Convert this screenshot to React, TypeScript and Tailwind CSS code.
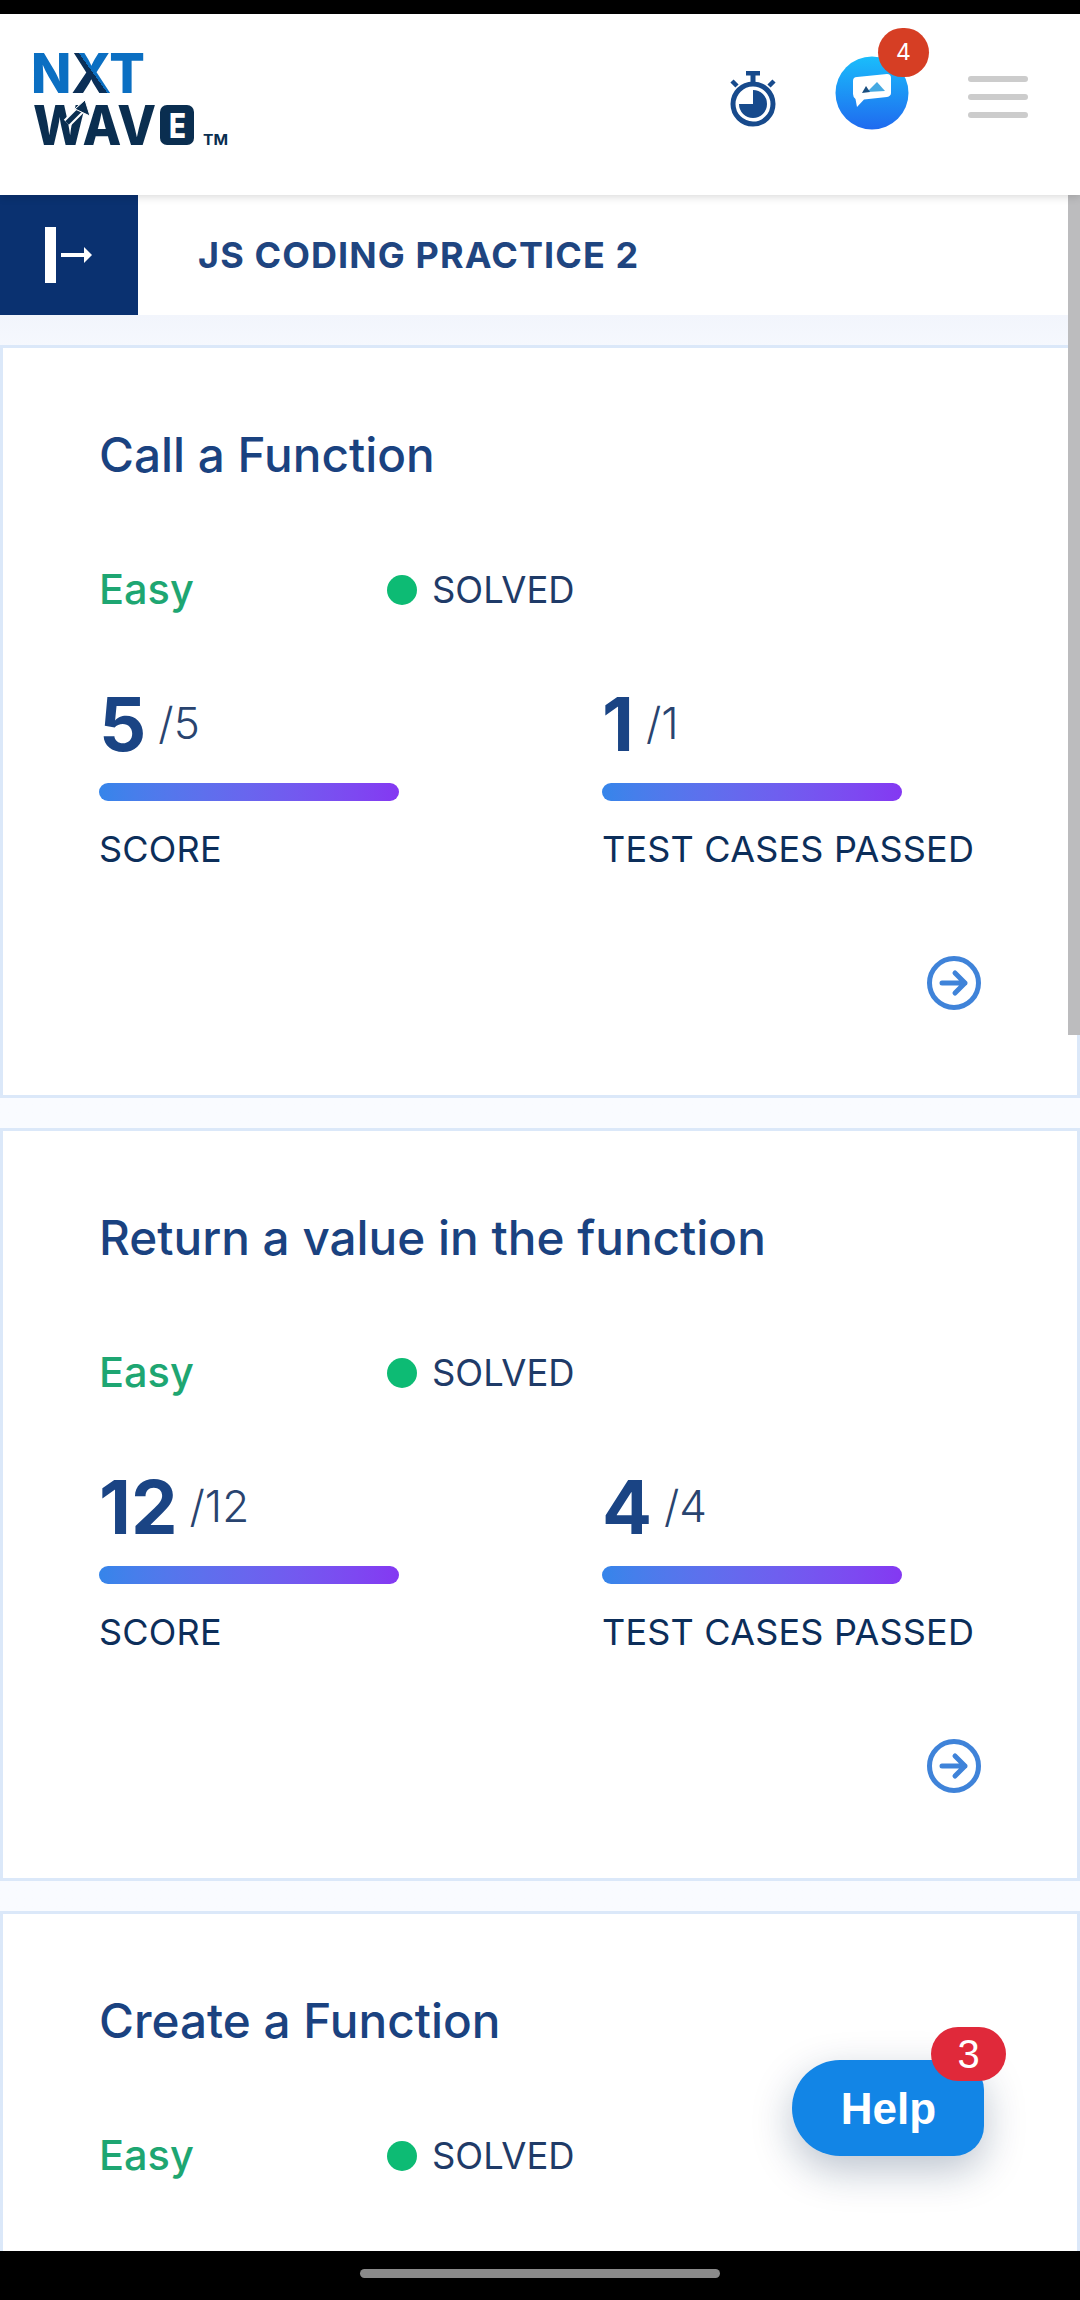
import React from "react";

function Logo() {
  return (
    <svg width="210" height="110" viewBox="0 0 210 110" className="block overflow-visible" aria-label="NXT WAVE">
      <defs>
        <linearGradient id="xg" gradientUnits="userSpaceOnUse" x1="34" y1="40" x2="76" y2="10">
          <stop offset="0" stopColor="#0b2f57" />
          <stop offset="0.62" stopColor="#0b2f57" />
          <stop offset="0.62" stopColor="#0b6fc2" />
          <stop offset="1" stopColor="#0b6fc2" />
        </linearGradient>
      </defs>
      <text x="-3" y="40" fontFamily="Inter" fontWeight="800" fontSize="55" textLength="114" lengthAdjust="spacingAndGlyphs">
        <tspan fill="#0b6fc2">N</tspan>
        <tspan fill="url(#xg)">X</tspan>
        <tspan fill="#0b6fc2">T</tspan>
      </text>
      <text x="-1" y="92" fontFamily="Inter" fontWeight="800" fontSize="55" fill="#0a2e50" textLength="123" lengthAdjust="spacingAndGlyphs">WAV</text>
      <path d="M33 70 L48 55" fill="none" stroke="#fff" strokeWidth="9" />
      <path d="M33 70 L48 55" fill="none" stroke="#0a2e50" strokeWidth="5" />
      <path d="M41 56 L51 47 L56 63 Z" fill="#0a2e50" stroke="#fff" strokeWidth="1" />
      <rect x="126" y="52" width="34" height="40" rx="7" fill="#0a2e50" />
      <text x="135" y="85" fontFamily="Inter" fontWeight="800" fontSize="34" fill="#fff" textLength="17" lengthAdjust="spacingAndGlyphs">E</text>
      <text x="169" y="92" fontFamily="Inter" fontWeight="700" fontSize="15" fill="#0a2e50" textLength="25" lengthAdjust="spacingAndGlyphs">TM</text>
    </svg>
  );
}

function Stopwatch() {
  return (
    <svg width="50" height="56" viewBox="0 0 50 56" className="block">
      <rect x="18" y="0" width="14" height="4.5" fill="#174a8c" />
      <rect x="22.5" y="3" width="5" height="8" fill="#174a8c" />
      <path d="M4 10 L9 15 M46 10 L41 15" stroke="#174a8c" strokeWidth="4.5" />
      <circle cx="25" cy="33" r="20" fill="none" stroke="#174a8c" strokeWidth="5" />
      <path d="M25 19 A14 14 0 1 1 11 33 H25 Z" fill="#174a8c" />
    </svg>
  );
}

function ChatIcon() {
  return (
    <svg width="74" height="74" viewBox="0 0 74 74" className="block">
      <defs>
        <linearGradient id="chat" x1="0" y1="0" x2="0" y2="1">
          <stop offset="0" stopColor="#1abdfb" />
          <stop offset="1" stopColor="#1f6aef" />
        </linearGradient>
      </defs>
      <circle cx="37" cy="37" r="36.5" fill="url(#chat)" />
      <path d="M22 21 L52 18 Q56 18 56 22 L56 37 Q56 40 52 41 L29 43.5 L22 51 L20.5 43 Q18 41 18 38 L18 25 Q18 21 22 21 Z" fill="#fff" />
      <path d="M32 36 L42 26 L50 35 Z" fill="#45a9e2" />
      <path d="M27 37 L31 30 L35 36 Z" fill="#1b4f80" />
    </svg>
  );
}

function ArrowCircle() {
  return (
    <svg width="56" height="56" viewBox="0 0 56 56" className="block">
      <circle cx="28" cy="28" r="24.5" fill="none" stroke="#3f83d9" strokeWidth="5" />
      <path d="M16 28 H39 M29 18 L39 28 L29 38" fill="none" stroke="#3f83d9" strokeWidth="5" strokeLinecap="round" strokeLinejoin="round" />
    </svg>
  );
}

function Stat({ value, total, label }: { value: string; total: string; label: string }) {
  return (
    <div>
      <div className="flex items-center h-[76px] leading-[76px]">
        <span className="text-[74px] font-bold text-[#1a4484]">{value}</span>
        <span className="text-[44px] font-light text-[#29446f] ml-[12px] -mt-[2px]">{total}</span>
      </div>
      <div className="mt-[21px] h-[18px] w-[300px] rounded-full bg-gradient-to-r from-[#3585ea] to-[#8438f2]" />
      <div className="mt-[28px] h-[40px] leading-[40px] text-[36px] tracking-[0.2px] text-[#0c2e5a] whitespace-nowrap">{label}</div>
    </div>
  );
}

function Card({ title, stats }: { title: string; stats?: { value: string; total: string; cases: string; casesTotal: string } }) {
  return (
    <section className="h-[753px] shrink-0 bg-white border-[3px] border-[#dbe8f9] pt-[77px] pl-[96px] pr-[95px]">
      <h2 className="h-[60px] leading-[60px] text-[47.7px] font-[450] text-[#1a4280]">{title}</h2>
      <div className="mt-[80px] flex items-center h-[50px]">
        <span className="w-[288px] text-[41.5px] font-medium text-[#1ea672] -mt-[2px]">Easy</span>
        <span className="w-[30px] h-[30px] rounded-full bg-[#0dbb74]" />
        <span className="ml-[15px] text-[36.4px] text-[#1f3b68]">SOLVED</span>
      </div>
      {stats && (
        <>
          <div className="mt-[71px] grid grid-cols-[503px_1fr]">
            <Stat value={stats.value} total={stats.total} label="SCORE" />
            <Stat value={stats.cases} total={stats.casesTotal} label="TEST CASES PASSED" />
          </div>
          <div className="mt-[86px] flex justify-end">
            <ArrowCircle />
          </div>
        </>
      )}
    </section>
  );
}

export default function App() {
  return (
    <div className="relative flex flex-col h-[2300px] w-[1080px] overflow-hidden bg-white font-['Inter',sans-serif]">
      <div className="h-[14px] shrink-0 bg-black" />
      <header className="relative z-10 h-[181px] shrink-0 bg-white flex items-center pl-[34px] pr-[52px] shadow-[0_2px_8px_rgba(0,0,0,0.15)]">
        <div className="mt-[7px]">
          <Logo />
        </div>
        <div className="ml-auto flex items-center">
          <div className="-mt-[4px] mr-[57px] -translate-y-[4px]">
            <Stopwatch />
          </div>
          <div className="relative -mt-[16px] mr-[59px] -translate-y-[4px]">
            <ChatIcon />
            <span className="absolute -top-[28px] left-[43px] w-[51px] h-[49px] rounded-full bg-[#d63e24] text-white text-[23px] flex items-center justify-center">4</span>
          </div>
          <div className="-mt-[16px] w-[60px] flex flex-col gap-[12px]">
            <span className="h-[6px] rounded-full bg-[#cccccc]" />
            <span className="h-[6px] rounded-full bg-[#cccccc]" />
            <span className="h-[6px] rounded-full bg-[#cccccc]" />
          </div>
        </div>
      </header>
      <div className="h-[120px] shrink-0 flex items-center bg-white">
        <div className="w-[138px] h-[120px] bg-[#0a3170] flex items-center pl-[45px] gap-[5px]">
          <span className="w-[11px] h-[56px] bg-white" />
          <svg width="31" height="16" viewBox="0 0 31 16" className="block">
            <path d="M0 6 H23 V0 L31 8 L23 16 V10 H0 Z" fill="#fff" />
          </svg>
        </div>
        <h1 className="ml-[60px] text-[36px] font-bold text-[#1f4580] tracking-[1.1px]">JS CODING PRACTICE 2</h1>
      </div>
      <main className="flex-1 min-h-0 overflow-hidden flex flex-col gap-[30px] pt-[30px] bg-gradient-to-b from-[#f2f5fc] to-[#f9fbff] to-[60px]">
        <Card title="Call a Function" stats={{ value: "5", total: "/5", cases: "1", casesTotal: "/1" }} />
        <Card title="Return a value in the function" stats={{ value: "12", total: "/12", cases: "4", casesTotal: "/4" }} />
        <Card title="Create a Function" />
      </main>
      <footer className="h-[49px] shrink-0 bg-black flex justify-center items-center">
        <span className="w-[360px] h-[9px] rounded-full bg-[#8a8a8a] mt-[-4px]" />
      </footer>
      <div className="absolute right-0 top-[195px] w-[12px] h-[840px] bg-[#bcbcbe]" />
      <div className="absolute left-[792px] top-[2060px] w-[192px] h-[96px] rounded-l-[48px] rounded-r-[30px] bg-[#1285e6] shadow-[0_14px_40px_rgba(10,40,80,0.28)] flex items-center justify-center pl-[1px] pt-[2px] text-white font-bold text-[44px] font-['Liberation_Sans',sans-serif]">
        Help
        <span className="absolute left-[139px] -top-[33px] w-[75px] h-[54px] rounded-full bg-[#e0293a] flex items-center justify-center font-normal text-[40px]">3</span>
      </div>
    </div>
  );
}
